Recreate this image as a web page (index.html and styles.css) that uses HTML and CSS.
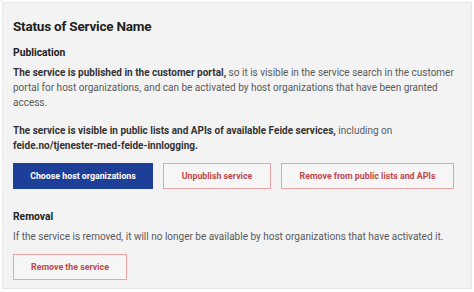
FILE: index.html
```html
<!DOCTYPE html>
<html lang="en">
<head>
    <meta charset="UTF-8">
    <meta name="viewport" content="width=device-width, initial-scale=1.0">
    <title>Status of Service Name</title>
    <link rel="stylesheet" href="styles.css">
</head>
<body>
    <div class="panel">
        <h2>Status of Service Name</h2>

        <div class="section">
            <h3>Publication</h3>
            <p><strong>The service is published in the customer portal,</strong> so it is visible in the service search in the customer portal for host organizations, and can be activated by host organizations that have been granted access.</p>
            <p class="last"><strong>The service is visible in public lists and APIs of available Feide services,</strong> including on <strong>feide.no/tjenester-med-feide-innlogging.</strong></p>
            <div class="actions">
                <button class="btn primary">Choose host organizations</button>
                <button class="btn danger unpublish">Unpublish service</button>
                <button class="btn danger unlist">Remove from public lists and APIs</button>
            </div>
        </div>

        <div class="section">
            <h3>Removal</h3>
            <p class="last">If the service is removed, it will no longer be available by host organizations that have activated it.</p>
            <div class="actions">
                <button class="btn danger remove">Remove the service</button>
            </div>
        </div>
    </div>
</body>
</html>
```

FILE: styles.css
```css
body {
    font-family: Roboto, "Liberation Sans", sans-serif;
    color: #5a5a5a;
    margin: 0;
    padding: 2px;
    background: #fff;
}
.panel {
    background-color: #f3f3f3;
    border: 1px solid #e8e8e8;
    padding: 13px 14px 10px 10px;
    height: 287px;
    box-sizing: border-box;
}
h2 {
    margin: 0 0 10px;
    font-size: 13.5px;
    letter-spacing: -0.2px;
    line-height: 20px;
    color: #222;
}
h3 {
    margin: 0 0 5px;
    font-size: 10.3px;
    line-height: 14px;
    color: #222;
}
p {
    margin: 0 0 13px;
    font-size: 10px;
    line-height: 15px;
}
p.last {
    margin-bottom: 10px;
}
strong {
    color: #333;
}
.section {
    margin-bottom: 21px;
}
.actions {
    display: flex;
    gap: 10px;
}
.btn {
    font-family: inherit;
    font-size: 8.8px;
    font-weight: bold;
    height: 26px;
    padding: 0;
    border-radius: 0;
    white-space: nowrap;
    cursor: pointer;
}
.primary {
    background-color: #1e3f98;
    border: 1px solid #1e3f98;
    color: #fff;
    width: 140px;
}
.danger {
    background-color: #f6f6f6;
    border: 1px solid #eaa4a4;
    color: #c1474b;
}
.unpublish {
    width: 108px;
}
.unlist {
    width: 173px;
}
.remove {
    width: 114px;
}
```
